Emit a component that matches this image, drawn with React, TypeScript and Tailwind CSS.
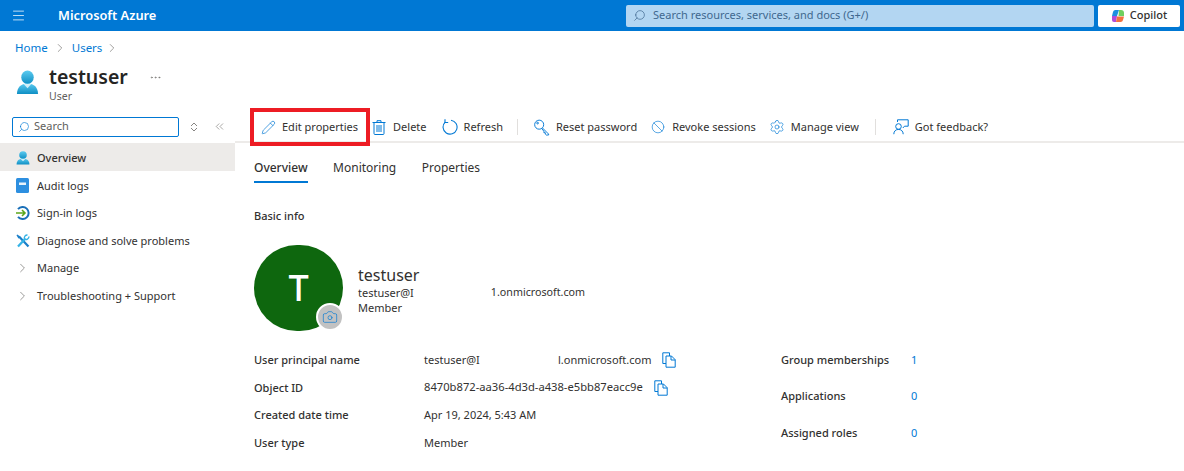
import React from 'react';
import { ChevronRight, ChevronsLeft, Menu, Search, MoreHorizontal, Pencil, Ban, Settings, Camera } from 'lucide-react';

const font = { fontFamily: '"Noto Sans", "Open Sans", sans-serif' };

const UserIcon = ({ w = 24, h = 24, id }: { w?: number; h?: number; id: string }) => (
    <svg width={w} height={h} viewBox="0 0 24 24" preserveAspectRatio="none">
        <defs>
            <linearGradient id={id} x1="0" y1="0" x2="0" y2="1">
                <stop offset="0" stopColor="#5ccbf0" />
                <stop offset="1" stopColor="#0f8fc4" />
            </linearGradient>
        </defs>
        <circle cx="12" cy="7" r="6.5" fill={`url(#${id})`} />
        <path d="M1 23c0-6 4-10 11-10s11 4 11 10z" fill={`url(#${id})`} />
        <path d="M8 13.500l4 4 4-4z" fill="#fff" opacity="0.75" />
    </svg>
);

const AuditIcon = () => (
    <svg width="13" height="15" viewBox="0 0 13 15">
        <rect x="0" y="0" width="13" height="15" rx="1.500" fill="#2d8fe0" />
        <rect x="3" y="4.500" width="7" height="2.500" fill="#e8f3fc" />
    </svg>
);

const SignInIcon = () => (
    <svg width="15" height="14" viewBox="0 0 15 14" fill="none">
        <path d="M3 3.200a6 6 0 1 1 0 7.600" stroke="#1a6fb8" strokeWidth="2" />
        <path d="M1 7h9M7 4l3 3-3 3" stroke="#5ca61c" strokeWidth="1.600" />
    </svg>
);

const ToolsIcon = () => (
    <svg width="14" height="14" viewBox="0 0 14 14" fill="none">
        <path d="M3 2.500l9.500 10" stroke="#1a7fc9" strokeWidth="2.200" />
        <path d="M1 1l2 1.500-.5 1z" stroke="#1a7fc9" strokeWidth="1.200" />
        <path d="M2 12.500L9.500 4.500" stroke="#35b3e6" strokeWidth="2.200" />
        <path d="M13 2.500a3 3 0 0 1-4.500 2.500M8.500 5a3 3 0 0 1 3-4" stroke="#35b3e6" strokeWidth="1.400" />
    </svg>
);

const CopilotIcon = () => (
    <svg width="14" height="14" viewBox="0 0 14 14">
        <path d="M4 1h4L6 7H1l1-4a2.500 2.500 0 0 1 2-2z" fill="#1b8fe0" />
        <path d="M8 1h2a3 3 0 0 1 3 3v3H7.500z" fill="#6fcf5e" />
        <path d="M1 7h5L5 13H3a2 2 0 0 1-2-2z" fill="#b04cd8" />
        <path d="M6 7.500h7l-1 3.500a2.500 2.500 0 0 1-2.500 2H5z" fill="#f2703f" />
    </svg>
);

const FeedbackIcon = () => (
    <svg width="16" height="16" viewBox="0 0 16 16" fill="none" stroke="#0078d4" strokeWidth="1">
        <path d="M4.500 3V0.800H15.200V7.200H11.500L9.800 9" />
        <circle cx="5.500" cy="7.500" r="2.800" />
        <path d="M0.800 15.200c0-3 2-4.800 4.700-4.800s4.700 1.800 4.700 4.800" />
    </svg>
);

const TrashIcon = () => (
    <svg width="14" height="15" viewBox="0 0 14 15" fill="none" stroke="#0078d4" strokeWidth="1">
        <path d="M0.500 2.500h13M5 2.500V0.700h4v1.800M2 2.500v11a1 1 0 0 0 1 1h8a1 1 0 0 0 1-1v-11" />
        <path d="M5 5v7M7 5v7M9 5v7" />
    </svg>
);

const RefreshIcon = () => (
    <svg width="16" height="16" viewBox="0 0 16 16" fill="none" stroke="#0078d4" strokeWidth="1.100">
        <path d="M9 1.200a7 7 0 1 1-5.800 1.900" />
        <path d="M3 0.300v3.200h3.200" />
    </svg>
);

const KeyIcon = () => (
    <svg width="17" height="17" viewBox="0 0 17 17" fill="none" stroke="#0078d4" strokeWidth="1">
        <circle cx="5.500" cy="5.500" r="4.800" />
        <circle cx="3.800" cy="3.800" r="0.900" />
        <path d="M9 9l6.500 6.500v1h-2.500l-1-1v-1.500h-1.500v-1.500L8.500 10" />
    </svg>
);

const CopyIcon = () => (
    <svg width="14" height="16" viewBox="0 0 14 16" fill="none" stroke="#0078d4" strokeWidth="1">
        <path d="M4 11.500H0.800V0.800H7.500V4" />
        <path d="M4 4h5.500l3.700 3.700v7.500H4z" />
        <path d="M9 4v4h4.200" />
    </svg>
);

const SortIcon = () => (
    <svg width="8" height="10" viewBox="0 0 8 10" fill="none" stroke="#797775" strokeWidth="0.900">
        <path d="M1 4l3-3 3 3M1 6l3 3 3-3" />
    </svg>
);

const Action = ({ icon, label, className = '' }: { icon: React.ReactNode; label: string; className?: string }) => (
    <div className={`flex items-center gap-[6px] text-[11px] text-[#323130] whitespace-nowrap ${className}`}>
        <div className="w-[16px] flex justify-center">{icon}</div>
        <span>{label}</span>
    </div>
);

const navItems: { icon: React.ReactNode; label: string; active?: boolean }[] = [
    { icon: <UserIcon w={14} h={14} id="nav-user" />, label: 'Overview', active: true },
    { icon: <AuditIcon />, label: 'Audit logs' },
    { icon: <SignInIcon />, label: 'Sign-in logs' },
    { icon: <ToolsIcon />, label: 'Diagnose and solve problems' },
    { icon: <ChevronRight size={16} strokeWidth={1} className="text-[#605e5c]" />, label: 'Manage' },
    { icon: <ChevronRight size={16} strokeWidth={1} className="text-[#605e5c]" />, label: 'Troubleshooting + Support' },
];

const Row = ({ label, value, copy }: { label: string; value: React.ReactNode; copy?: boolean }) => (
    <div className="flex items-center h-[27.5px] text-[11px] text-[#323130]">
        <div className="w-[170px] font-medium">{label}</div>
        <div className="flex items-center gap-[11px]">
            {value}
            {copy && <CopyIcon />}
        </div>
    </div>
);

const Stat = ({ label, value }: { label: string; value: string }) => (
    <div className="flex items-center h-[36.5px] text-[11px]">
        <div className="w-[130px] font-medium text-[#323130]">{label}</div>
        <div className="text-[#0078d4]">{value}</div>
    </div>
);

export default function App() {
    return (
        <div className="h-[471px] w-[1184px] overflow-hidden bg-white flex flex-col" style={font}>
            {/* Top bar */}
            <header className="h-[31px] bg-[#0078d4] flex items-center text-white shrink-0">
                <Menu size={15} strokeWidth={1.2} className="ml-[11px]" />
                <div className="ml-[32px] w-[98px] whitespace-nowrap text-[12.8px] font-semibold">Microsoft Azure</div>
                <div className="ml-[470px] w-[468px] h-[22px] rounded-[2px] bg-[#b3d6f2] flex items-center pl-[7px] gap-[7px] text-[11px] text-[#40688f]">
                    <Search size={13} strokeWidth={1.3} className="-scale-x-100" />
                    <span>Search resources, services, and docs (G+/)</span>
                </div>
                <div className="ml-[4px] w-[82px] h-[22px] rounded-[2px] bg-white flex items-center justify-center gap-[5px] text-[11px] font-medium text-[#323130]">
                    <CopilotIcon />
                    <span>Copilot</span>
                </div>
            </header>

            {/* Breadcrumb and title */}
            <div className="pl-[15px] pt-[8px] h-[79px] shrink-0">
                <div className="flex items-center gap-[3px] h-[17px] text-[11.5px] text-[#0078d4]">
                    <span>Home</span>
                    <ChevronRight size={14} strokeWidth={1} className="text-[#605e5c] mx-[2px]" />
                    <span>Users</span>
                    <ChevronRight size={14} strokeWidth={1} className="text-[#605e5c]" />
                </div>
                <div className="flex mt-[9px]">
                    <div className="mt-[5px] ml-px"><UserIcon w={23} h={25} id="title-user" /></div>
                    <div className="ml-[10px]">
                        <div className="flex items-center">
                            <span className="text-[19.5px] leading-[24px] font-semibold text-[#252423]">testuser</span>
                            <MoreHorizontal size={13} strokeWidth={1} className="ml-[21px] text-[#605e5c]" />
                        </div>
                        <div className="text-[10.5px] leading-[14px] text-[#605e5c]">User</div>
                    </div>
                </div>
            </div>

            <div className="flex flex-1 min-h-0">
                {/* Sidebar */}
                <aside className="w-[235px] shrink-0 text-[11px] text-[#323130]">
                    <div className="flex items-center h-[33px] pl-[12px]">
                        <div className="w-[167px] h-[20px] border-[1.5px] border-[#0078d4] rounded-[2px] flex items-center pl-[5px] gap-[4px] text-[#605e5c]">
                            <Search size={12} strokeWidth={1.3} className="text-[#0078d4] -scale-x-100" />
                            <span>Search</span>
                        </div>
                        <div className="ml-[11px]"><SortIcon /></div>
                        <ChevronsLeft size={13} strokeWidth={1} className="ml-[15px] text-[#605e5c]" />
                    </div>
                    {navItems.map(item => (
                        <div key={item.label} className={`flex items-center h-[27.5px] pl-[15px] pt-[3px] gap-[7px] ${item.active ? 'bg-[#edebe9] font-medium' : ''}`}>
                            <div className="w-[15px] flex justify-center">{item.icon}</div>
                            <span>{item.label}</span>
                        </div>
                    ))}
                </aside>

                {/* Main */}
                <main className="flex-1 min-w-0 pl-[19px]">
                    <div className="h-[33px] pt-[3px] -ml-[19px] pl-[25px] border-b-2 border-[#edebe9] flex items-center relative">
                        <Action icon={<Pencil size={15} strokeWidth={1.1} className="text-[#0078d4]" />} label="Edit properties" />
                        {/* red highlight round the first button */}
                        <div className="absolute left-[15px] top-[-2px] w-[120px] h-[38px] border-[4px] border-[#ed1c24]" />
                        <Action className="ml-[13px]" icon={<TrashIcon />} label="Delete" />
                        <Action className="ml-[15px]" icon={<RefreshIcon />} label="Refresh" />
                        <div className="ml-[14px] w-px h-[16px] bg-[#e1dfdd]" />
                        <Action className="ml-[16px]" icon={<KeyIcon />} label="Reset password" />
                        <Action className="ml-[13px]" icon={<Ban size={14} strokeWidth={1.1} className="text-[#0078d4]" />} label="Revoke sessions" />
                        <Action className="ml-[13px]" icon={<Settings size={16} strokeWidth={1} className="text-[#0078d4]" />} label="Manage view" />
                        <div className="ml-[16px] w-px h-[16px] bg-[#e1dfdd]" />
                        <Action className="ml-[17px]" icon={<FeedbackIcon />} label="Got feedback?" />
                    </div>

                    <nav className="flex gap-[25.5px] mt-[9px] text-[12px] text-[#323130] h-[31px]">
                        <div className="font-medium border-b-2 border-[#0078d4] h-[31px] leading-[31px]">Overview</div>
                        <div className="leading-[31px]">Monitoring</div>
                        <div className="leading-[31px]">Properties</div>
                    </nav>

                    <div className="mt-[25px] text-[11px] font-medium text-[#323130]">Basic info</div>

                    <div className="flex mt-[20px]">
                        <div className="relative w-[90px] h-[86px]">
                            <div className="w-[89px] h-[86px] rounded-full bg-[#0e670e] text-white text-[36px] font-medium flex items-center justify-center">T</div>
                            <div className="absolute right-[0px] bottom-[0px] w-[28px] h-[28px] rounded-full bg-[#c2c2c2] border-2 border-white flex items-center justify-center">
                                <Camera size={16} strokeWidth={1} className="text-[#0078d4]" />
                            </div>
                        </div>
                        <div className="ml-[14px] pt-[21px]">
                            <div className="text-[16px] leading-[19px] text-[#323130]">testuser</div>
                            <div className="flex text-[11px] leading-[15px] text-[#323130]">
                                <span className="whitespace-nowrap">testuser@I</span>
                                <span className="ml-[77px] text-[10.7px]">1.onmicrosoft.com</span>
                            </div>
                            <div className="text-[11px] leading-[15px] text-[#323130]">Member</div>
                        </div>
                    </div>

                    <div className="flex mt-[16px]">
                        <div className="w-[527px]">
                            <Row label="User principal name" copy value={<div className="flex"><span className="w-[134px]">testuser@I</span><span>l.onmicrosoft.com</span></div>} />
                            <Row label="Object ID" copy value={<span className="text-[11.2px]">8470b872-aa36-4d3d-a438-e5bb87eacc9e</span>} />
                            <Row label="Created date time" value={<span>Apr 19, 2024, 5:43 AM</span>} />
                            <Row label="User type" value={<span>Member</span>} />
                        </div>
                        <div className="-mt-[5px]">
                            <Stat label="Group memberships" value="1" />
                            <Stat label="Applications" value="0" />
                            <Stat label="Assigned roles" value="0" />
                        </div>
                    </div>
                </main>
            </div>
        </div>
    );
}
